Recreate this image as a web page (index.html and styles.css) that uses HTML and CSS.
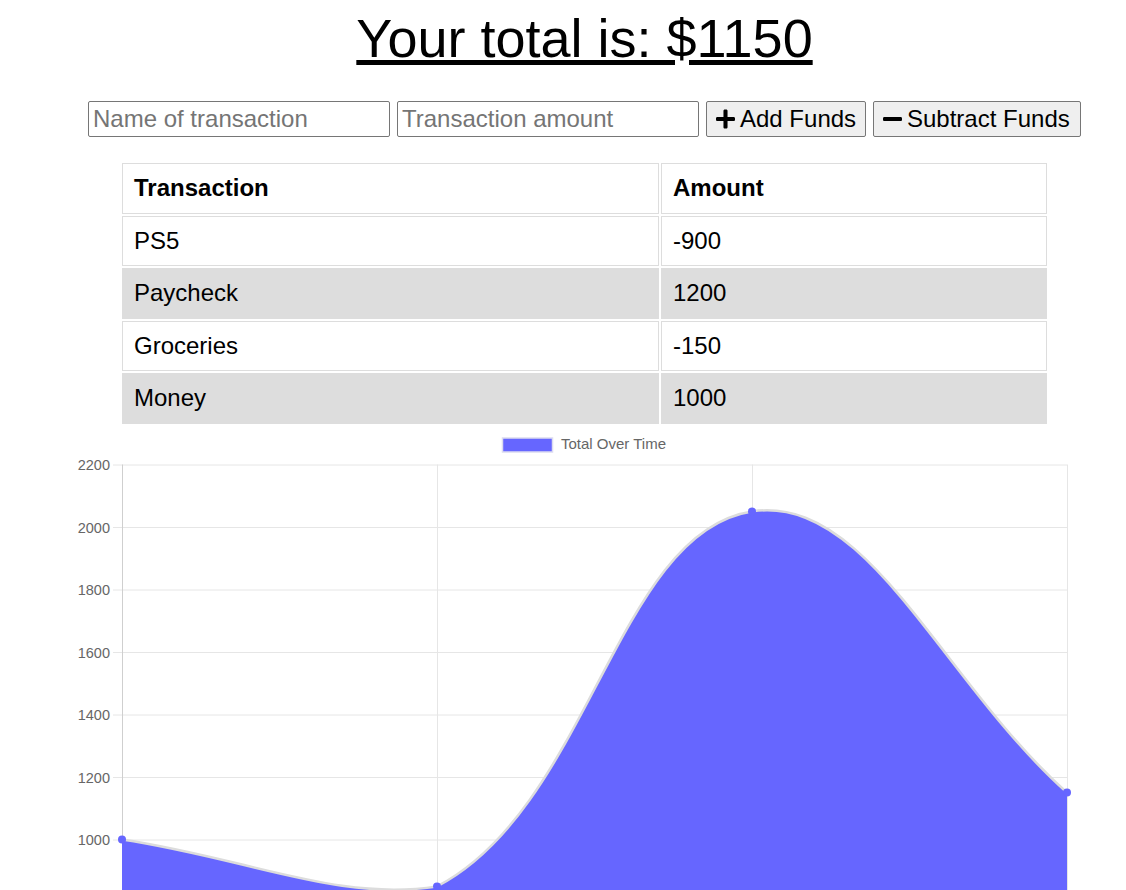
FILE: index.html
```html
<!DOCTYPE html>
<html lang="en">
<head>
<meta charset="utf-8">
<title>Budget Tracker</title>
<link rel="stylesheet" href="styles.css">
</head>
<body>
<div class="page">
  <h1 class="total">Your total is: $1150</h1>
  <form class="entry">
    <input class="field" type="text" placeholder="Name of transaction">
    <input class="field" type="number" placeholder="Transaction amount">
    <button class="btn btn-add" type="button">
      <svg class="ico" viewBox="0 0 448 512"><path d="M416 208H272V64c0-17.67-14.33-32-32-32h-32c-17.67 0-32 14.33-32 32v144H32c-17.67 0-32 14.33-32 32v32c0 17.67 14.33 32 32 32h144v144c0 17.67 14.330 32 32 32h32c17.67 0 32-14.33 32-32V304h144c17.67 0 32-14.33 32-32v-32c0-17.67-14.33-32-32-32z"/></svg>Add Funds
    </button>
    <button class="btn btn-sub" type="button">
      <svg class="ico" viewBox="0 0 448 512"><path d="M416 208H32c-17.670 0-32 14.33-32 32v32c0 17.67 14.33 32 32 32h384c17.67 0 32-14.33 32-32v-32c0-17.67-14.33-32-32-32z"/></svg>Subtract Funds
    </button>
  </form>
  <table class="tx">
    <thead>
      <tr><th class="c1">Transaction</th><th>Amount</th></tr>
    </thead>
    <tbody>
      <tr><td>PS5</td><td>-900</td></tr>
      <tr><td>Paycheck</td><td>1200</td></tr>
      <tr><td>Groceries</td><td>-150</td></tr>
      <tr><td>Money</td><td>1000</td></tr>
    </tbody>
  </table>
  <svg class="chart" viewBox="8 425.5 1153 464.5" width="1153" height="464.5">
    <g class="legend">
      <rect x="502.5" y="437.5" width="50" height="14" fill="#6666ff" stroke="#dcdcf0" stroke-width="1.5"/>
      <text x="561" y="448.5" class="lbl lg">Total Over Time</text>
    </g>
    <g stroke="#e6e6e6" stroke-width="1">
      <line x1="113" y1="464.5" x2="1067" y2="464.5"/>
      <line x1="113" y1="527" x2="1067" y2="527"/>
      <line x1="113" y1="589.5" x2="1067" y2="589.5"/>
      <line x1="113" y1="652" x2="1067" y2="652"/>
      <line x1="113" y1="714.5" x2="1067" y2="714.5"/>
      <line x1="113" y1="777" x2="1067" y2="777"/>
      <line x1="113" y1="839.5" x2="1067" y2="839.5"/>
      <line x1="437.5" y1="464" x2="437.5" y2="900"/>
      <line x1="752.5" y1="464" x2="752.5" y2="900"/>
      <line x1="1067.5" y1="464" x2="1067.5" y2="900"/>
    </g>
    <line x1="122.5" y1="464" x2="122.5" y2="900" stroke="#cfcfcf" stroke-width="1"/>
    <g class="lbl" text-anchor="end">
      <text x="110" y="469.5">2200</text>
      <text x="110" y="532">2000</text>
      <text x="110" y="594.5">1800</text>
      <text x="110" y="657">1600</text>
      <text x="110" y="719.5">1400</text>
      <text x="110" y="782">1200</text>
      <text x="110" y="844.5">1000</text>
    </g>
    <path fill="#6666ff" d="M122,839 C248,857.8 337.7,901.5 437,885.9 C589.7,806.4 616.7,531 752,510.9 C868.7,493.5 941,679.6 1067,792.1 L1067,901.5 L122,901.5 Z"/>
    <path fill="none" stroke="#dcdcdc" stroke-width="2.5" d="M122,839 C248,857.8 337.7,901.5 437,885.9 C589.7,806.4 616.7,531 752,510.9 C868.7,493.5 941,679.6 1067,792.1"/>
    <g fill="#6666ff">
      <circle cx="122" cy="839" r="4"/>
      <circle cx="437" cy="885.9" r="4"/>
      <circle cx="752" cy="510.9" r="4"/>
      <circle cx="1067" cy="792.1" r="4"/>
    </g>
  </svg>
</div>
</body>
</html>
```
FILE: styles.css
```css
html {
  overflow: hidden;
}
body {
  margin: 0;
  background: #ffffff;
  font-family: "Liberation Sans", Arial, sans-serif;
  color: #000;
}
.page {
  width: 1153px;
  margin: 8px 0 0 8px;
}
.total {
  margin: 0;
  font-size: 54px;
  line-height: 61px;
  font-weight: normal;
  text-align: center;
  text-decoration: underline;
}
.entry {
  margin-top: 32px;
  display: flex;
  justify-content: center;
  gap: 7px;
}
.field {
  box-sizing: border-box;
  width: 302px;
  height: 36px;
  margin: 0;
  padding: 0 4px;
  border: 1px solid #767676;
  border-radius: 2px;
  font-family: "Liberation Sans", Arial, sans-serif;
  font-size: 24px;
  color: #000;
  background: #fff;
}
.field::placeholder {
  color: #757575;
}
.field::-webkit-outer-spin-button,
.field::-webkit-inner-spin-button {
  -webkit-appearance: none;
  margin: 0;
}
.field[type=number] {
  -moz-appearance: textfield;
}
.btn {
  box-sizing: border-box;
  height: 36px;
  margin: 0;
  padding: 0 0 0 9px;
  display: flex;
  align-items: center;
  flex: none;
  border: 1px solid #767676;
  border-radius: 2px;
  background: #efefef;
  font-family: "Liberation Sans", Arial, sans-serif;
  font-size: 24px;
  color: #000;
  white-space: nowrap;
}
.btn-add {
  width: 160px;
}
.btn-sub {
  width: 208px;
}
.ico {
  flex: none;
  width: 19px;
  height: 22px;
  margin-right: 5px;
  fill: #000;
}
.tx {
  margin: 24px auto 0;
  width: 929px;
  border-spacing: 2px;
  table-layout: fixed;
}
.tx th,
.tx td {
  box-sizing: border-box;
  border: 1px solid #dddddd;
  padding: 10px 11px;
  line-height: 28.5px;
  font-size: 24px;
  text-align: left;
}
.tx th {
  font-weight: bold;
}
.tx .c1 {
  width: 537px;
}
.tx tbody tr:nth-child(even) td {
  background: #dddddd;
}
.chart {
  display: block;
}
.lbl {
  font-family: "Liberation Sans", Arial, sans-serif;
  font-size: 14.5px;
  fill: #666666;
}
.lg {
  font-size: 15px;
}
```
